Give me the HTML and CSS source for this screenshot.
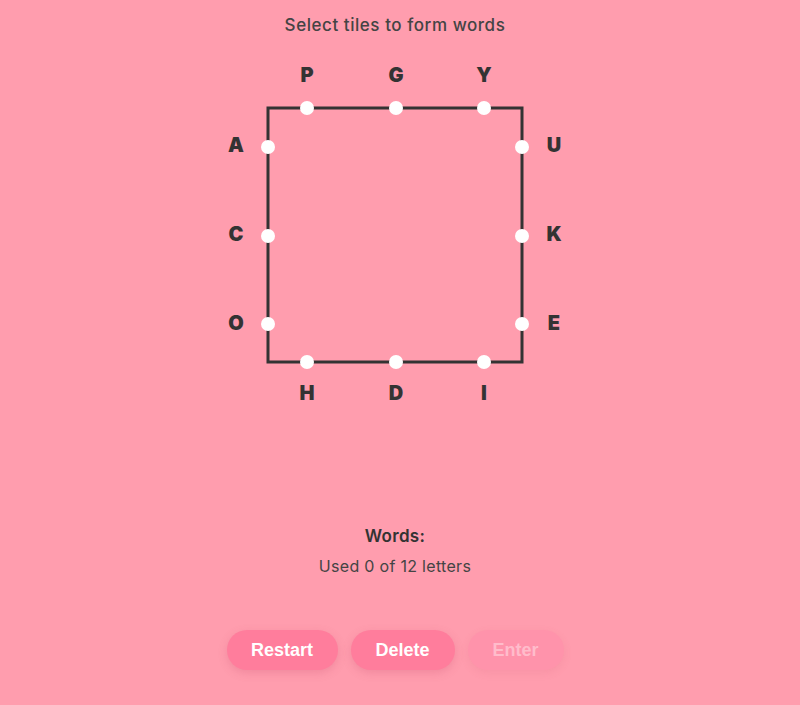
FILE: index.html
```html
<!DOCTYPE html>
<html>
<head>
<meta charset="utf-8">
<link rel="stylesheet" href="styles.css">
</head>
<body>
<main class="game">
  <h1 class="title">Select tiles to form words</h1>
  <svg class="board" width="400" height="360" viewBox="0 0 400 360">
    <rect x="73" y="58" width="254" height="254" fill="none" stroke="#333" stroke-width="3"/>
    <g fill="#fff">
      <circle cx="112" cy="58" r="7"/><circle cx="201" cy="58" r="7"/><circle cx="289" cy="58" r="7"/>
      <circle cx="112" cy="312" r="7"/><circle cx="201" cy="312" r="7"/><circle cx="289" cy="312" r="7"/>
      <circle cx="73" cy="97" r="7"/><circle cx="73" cy="186" r="7"/><circle cx="73" cy="274" r="7"/>
      <circle cx="327" cy="97" r="7"/><circle cx="327" cy="186" r="7"/><circle cx="327" cy="274" r="7"/>
    </g>
    <g class="letters" text-anchor="middle">
      <text x="112" y="32">P</text><text x="201" y="32">G</text><text x="289" y="32">Y</text>
      <text x="112" y="350">H</text><text x="201" y="350">D</text><text x="289" y="350">I</text>
      <text x="41" y="102">A</text><text x="41" y="191">C</text><text x="41" y="280">O</text>
      <text x="359" y="102">U</text><text x="359" y="191">K</text><text x="359" y="280">E</text>
    </g>
  </svg>
  <section class="status">
    <h2 class="words">Words:</h2>
    <p class="used">Used 0 of 12 letters</p>
  </section>
  <div class="actions">
    <button class="btn btn-restart">Restart</button>
    <button class="btn btn-delete">Delete</button>
    <button class="btn btn-enter" disabled>Enter</button>
  </div>
</main>
</body>
</html>
```
FILE: styles.css
```css
html, body {
  margin: 0;
  padding: 0;
  background: #ff9dae;
  height: 100%;
}
body {
  font-family: "Inter", "Open Sans", sans-serif;
  color: #3a3a3a;
}
.game {
  width: 790px;
  display: flex;
  flex-direction: column;
  align-items: center;
}
.title {
  margin: 14px 0 0;
  font-size: 17px;
  font-weight: 500;
  line-height: 22px;
  letter-spacing: 0.55px;
  color: #444;
}
.board {
  display: block;
  margin-top: 14px;
}
.letters text {
  font-family: "Inter", sans-serif;
  font-weight: 900;
  font-size: 20px;
  fill: #333;
}
.status {
  margin-top: 115px;
  text-align: center;
}
.words {
  margin: 0;
  font-size: 17px;
  font-weight: 600;
  line-height: 22px;
  letter-spacing: 0.3px;
  color: #333;
}
.used {
  margin: 9px 0 0;
  font-size: 16px;
  font-weight: 400;
  line-height: 20px;
  letter-spacing: 0.3px;
  color: #444;
}
.actions {
  margin-top: 54px;
  display: flex;
  gap: 13px;
}
.btn {
  height: 40px;
  border: none;
  border-radius: 20px;
  background: #ff7d9c;
  color: #fff;
  font-family: "Liberation Sans", Arial, sans-serif;
  font-weight: 700;
  font-size: 18px;
  box-shadow: 0 3px 8px rgba(200, 80, 110, 0.25);
  padding: 0;
}
.btn-restart { width: 111px; }
.btn-delete { width: 104px; }
.btn-enter {
  width: 96px;
  background: #ff93ab;
  color: #ffbccb;
  box-shadow: 0 3px 8px rgba(200, 80, 110, 0.12);
}
```
